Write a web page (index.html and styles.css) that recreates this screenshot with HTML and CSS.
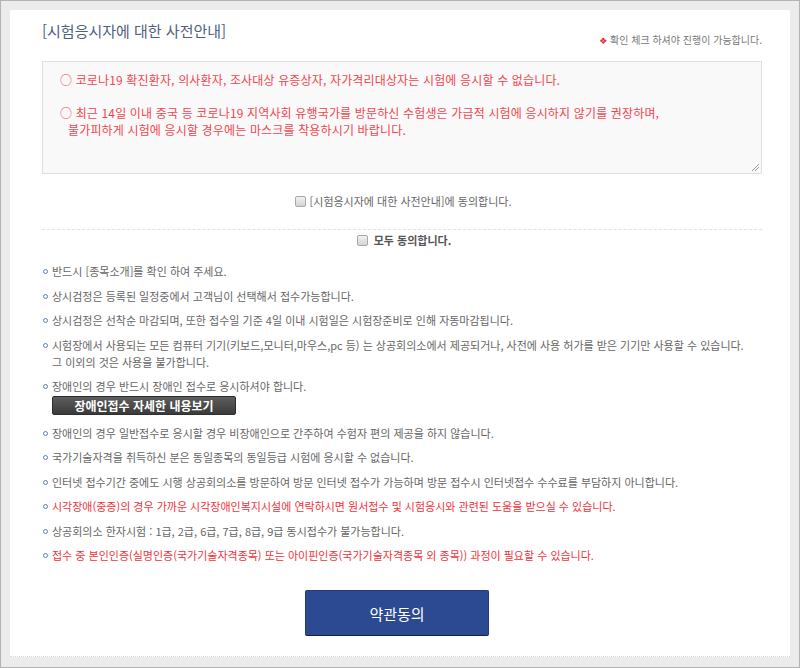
FILE: index.html
```html
<!DOCTYPE html>
<html lang="ko">
<head>
<meta charset="utf-8">
<title>시험응시자 사전안내</title>
<link rel="stylesheet" href="styles.css">
</head>
<body>
<div class="panel">
  <div class="header">
    <h2 class="title">[시험응시자에 대한 사전안내]</h2>
    <p class="note"><span class="note-icon">❖</span> 확인 체크 하셔야 진행이 가능합니다.</p>
  </div>
  <div class="notice-box">
    <p class="notice">○ 코로나19 확진환자, 의사환자, 조사대상 유증상자, 자가격리대상자는 시험에 응시할 수 없습니다.</p>
    <p class="notice">○ 최근 14일 이내 중국 등 코로나19 지역사회 유행국가를 방문하신 수험생은 가급적 시험에 응시하지 않기를 권장하며,<br><span class="indent">불가피하게 시험에 응시할 경우에는 마스크를 착용하시기 바랍니다.</span></p>
    <svg class="grip" width="10" height="10" viewBox="0 0 10 10"><path d="M9 2 L2 9 M9 5 L5 9" stroke="#999" stroke-width="1" fill="none"/></svg>
  </div>
  <label class="agree-row"><span class="check"></span>[시험응시자에 대한 사전안내]에 동의합니다.</label>
  <div class="all-row">
    <label class="agree-all"><span class="check"></span>모두 동의합니다.</label>
  </div>
  <ul class="info-list">
    <li>반드시 [종목소개]를 확인 하여 주세요.</li>
    <li>상시검정은 등록된 일정중에서 고객님이 선택해서 접수가능합니다.</li>
    <li>상시검정은 선착순 마감되며, 또한 접수일 기준 4일 이내 시험일은 시험장준비로 인해 자동마감됩니다.</li>
    <li>시험장에서 사용되는 모든 컴퓨터 기기(키보드,모니터,마우스,pc 등) 는 상공회의소에서 제공되거나, 사전에 사용 허가를 받은 기기만 사용할 수 있습니다.<br>그 이외의 것은 사용을 불가합니다.</li>
    <li>장애인의 경우 반드시 장애인 접수로 응시하셔야 합니다.<br><button class="dark-btn" type="button">장애인접수 자세한 내용보기</button></li>
    <li>장애인의 경우 일반접수로 응시할 경우 비장애인으로 간주하여 수험자 편의 제공을 하지 않습니다.</li>
    <li>국가기술자격을 취득하신 분은 동일종목의 동일등급 시험에 응시할 수 없습니다.</li>
    <li>인터넷 접수기간 중에도 시행 상공회의소를 방문하여 방문 인터넷 접수가 가능하며 방문 접수시 인터넷접수 수수료를 부담하지 아니합니다.</li>
    <li class="red">시각장애(중증)의 경우 가까운 시각장애인복지시설에 연락하시면 원서접수 및 시험응시와 관련된 도움을 받으실 수 있습니다.</li>
    <li>상공회의소 한자시험 : 1급, 2급, 6급, 7급, 8급, 9급 동시접수가 불가능합니다.</li>
    <li class="red">접수 중 본인인증(실명인증(국가기술자격종목) 또는 아이핀인증(국가기술자격종목 외 종목)) 과정이 필요할 수 있습니다.</li>
  </ul>
  <div class="submit-row">
    <button class="submit-btn" type="button">약관동의</button>
  </div>
</div>
</body>
</html>
```
FILE: styles.css
```css
html, body {
  margin: 0;
  padding: 0;
}
body {
  box-sizing: border-box;
  width: 800px;
  height: 668px;
  border: 1px solid #b4b4b4;
  background: #ececec;
  padding: 9px 9px 10px 9px;
  font-family: "Noto Sans CJK KR", "Noto Sans", sans-serif;
  color: #666;
}
.panel {
  box-sizing: border-box;
  height: 647px;
  background: #fff;
  border-bottom: 1px dotted #d8d8d8;
  padding: 11px 28px 0 32px;
  display: flex;
  flex-direction: column;
}
.header {
  display: flex;
  justify-content: space-between;
  align-items: flex-start;
  height: 26px;
}
.title {
  margin: 0;
  font-size: 15px;
  line-height: 20px;
  font-weight: normal;
  color: #4f5f80;
}
.note {
  margin: 12px 0 0 0;
  font-size: 10px;
  line-height: 14px;
  color: #777;
}
.note-icon {
  color: #e0262c;
  font-family: "DejaVu Sans", sans-serif;
  font-size: 9px;
}
.notice-box {
  position: relative;
  box-sizing: border-box;
  margin-top: 14px;
  height: 113px;
  border: 1px solid #e0e0e0;
  background: #f9f9f9;
  padding: 9px 17px 0 17px;
  color: #f2464e;
  font-size: 12px;
  line-height: 17px;
  letter-spacing: 0.15px;
}
.notice {
  margin: 0 0 16px 0;
}
.indent {
  padding-left: 8px;
}
.grip {
  position: absolute;
  right: 1px;
  bottom: 1px;
}
.agree-row {
  margin-top: 19px;
  align-self: center;
  display: flex;
  align-items: center;
  font-size: 11px;
  line-height: 16px;
  color: #666;
  padding-left: 2px;
}
.check {
  display: inline-block;
  box-sizing: border-box;
  width: 11px;
  height: 11px;
  border: 1px solid #a8a8a8;
  border-radius: 2px;
  background: linear-gradient(#f2f2f2, #d4d4d4);
  margin-right: 4px;
}
.all-row {
  margin-top: 20px;
  border-top: 1px dashed #e2e2e2;
  padding-top: 2px;
  display: flex;
  justify-content: center;
}
.agree-all {
  display: flex;
  align-items: center;
  font-size: 11px;
  line-height: 16px;
  font-weight: bold;
  color: #555;
  padding-left: 4px;
}
.agree-all .check {
  margin-right: 6px;
}
.info-list {
  list-style: none;
  margin: 15px 0 0 0;
  padding: 0;
  display: flex;
  flex-direction: column;
  gap: 7.5px;
}
.info-list li {
  position: relative;
  padding-left: 10px;
  font-size: 11px;
  line-height: 17px;
  color: #666;
}
.info-list li::before {
  content: "";
  position: absolute;
  left: 1px;
  top: 6px;
  width: 3px;
  height: 3px;
  border: 1px solid #5b7cc0;
  border-radius: 50%;
}
.info-list li.red {
  color: #f2323a;
}
.dark-btn {
  margin: 1px 0 2px 0;
  width: 184px;
  height: 19px;
  border: 1px solid #2e2e2e;
  border-radius: 2px;
  background: linear-gradient(#5e5e5e, #3a3a3a);
  color: #fff;
  font-family: inherit;
  font-size: 12px;
  font-weight: bold;
  line-height: 15px;
  padding: 0;
}
.submit-row {
  margin-top: 26px;
  display: flex;
  justify-content: center;
  padding-right: 10px;
}
.submit-btn {
  width: 184px;
  height: 46px;
  border: 1px solid #233c78;
  border-bottom-color: #14224a;
  border-radius: 2px;
  background: #2b4a91;
  color: #fff;
  font-family: inherit;
  font-size: 15px;
  padding: 0;
}
```
